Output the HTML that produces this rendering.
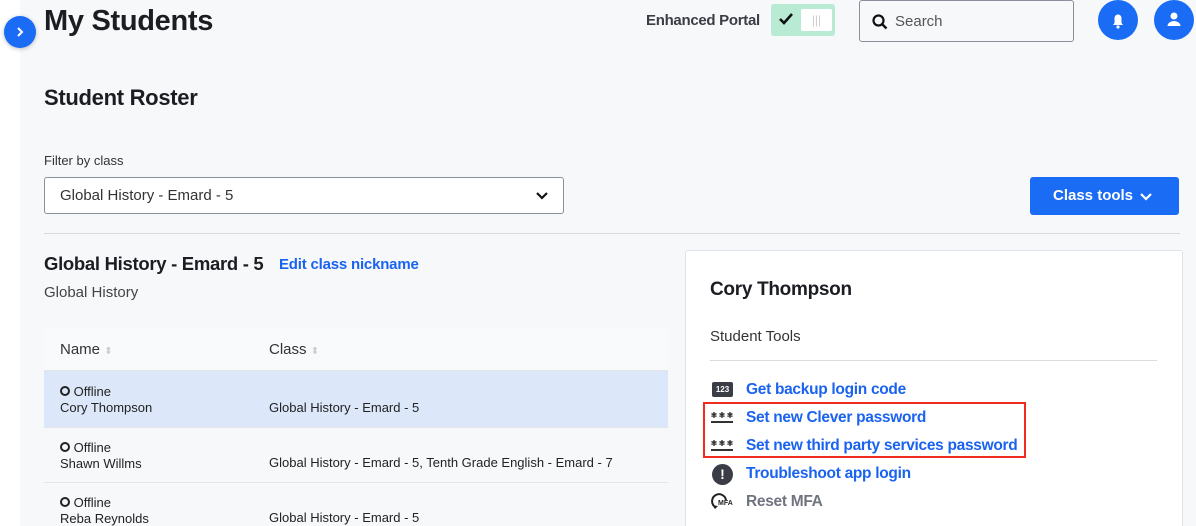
<!DOCTYPE html>
<html><head><style>
*{box-sizing:border-box;margin:0;padding:0}
html,body{width:1196px;height:526px;overflow:hidden}
body{background:#fff;font-family:"Liberation Sans",sans-serif;color:#1b1d22;position:relative}
.main{position:absolute;left:20px;top:0;width:1176px;height:526px;background:#f7f8fa}
.a{position:absolute;white-space:nowrap}
.blue{color:#1a63f0}
.circ{position:absolute;border-radius:50%;background:#1a6cf5}
</style></head><body>
<div class="main"></div>
<div class="circ" style="left:4px;top:16px;width:32px;height:32px;box-shadow:0 1px 4px rgba(0,0,0,.25)"><svg width="32" height="32"><path d="M14 12l4 4-4 4" stroke="#fff" stroke-width="2" fill="none"/></svg></div>
<div class="a" style="left:44px;top:5px;font-size:29px;font-weight:bold;letter-spacing:-0.3px">My Students</div>
<div class="a" style="left:646px;top:12px;font-size:15px;color:#3a3d45;font-weight:bold;letter-spacing:-0.3px">Enhanced Portal</div>
<div class="a" style="left:771px;top:4px;width:64px;height:32px;background:#b8ead4;border-radius:3px">
 <svg style="position:absolute;left:8px;top:9px" width="14" height="12"><path d="M1 6l4 4 8-9" stroke="#111" stroke-width="2.6" fill="none"/></svg>
 <div style="position:absolute;left:30px;top:5px;width:31px;height:22px;background:#fff;border-radius:2px;color:#ccc;font-size:12px;text-align:center;line-height:22px">|||</div></div>
<div class="a" style="left:859px;top:0;width:215px;height:42px;border:1px solid #8a8f9c;border-radius:3px;background:#f7f8fa">
 <svg style="position:absolute;left:12px;top:13px" width="16" height="16"><circle cx="6.5" cy="6.5" r="5" stroke="#111" stroke-width="2.2" fill="none"/><path d="M10 10l4.5 4.5" stroke="#111" stroke-width="2.4"/></svg>
 <span style="position:absolute;left:35px;top:12px;font-size:15px;color:#555">Search</span></div>
<div class="circ" style="left:1098px;top:0;width:40px;height:40px"><svg width="40" height="40"><path d="M15 25h10l-1.5-2v-5a3.5 3.5 0 0 0-7 0v5z" fill="#fff"/><circle cx="20" cy="27" r="1.6" fill="#fff"/></svg></div>
<div class="circ" style="left:1154px;top:0;width:40px;height:40px"><svg width="40" height="40"><circle cx="20" cy="16" r="3.5" fill="#fff"/><path d="M13.5 26a6.5 5 0 0 1 13 0z" fill="#fff"/></svg></div>
<div class="a" style="left:44px;top:85px;font-size:22px;font-weight:bold;letter-spacing:-0.3px">Student Roster</div>
<div class="a" style="left:44px;top:153px;font-size:13px;color:#333">Filter by class</div>
<div class="a" style="left:44px;top:177px;width:520px;height:37px;border:1px solid #8a8f9c;border-radius:3px;background:#fff">
 <span style="position:absolute;left:15px;top:9px;font-size:15px;color:#333">Global History - Emard - 5</span>
 <svg style="position:absolute;right:15px;top:13px" width="12" height="10"><path d="M1 2l5 5 5-5" stroke="#111" stroke-width="2.2" fill="none"/></svg></div>
<div class="a" style="left:1030px;top:177px;width:149px;height:38px;background:#1a6cf5;border-radius:3px;color:#fff;font-size:15px;font-weight:bold">
 <span style="position:absolute;left:23px;top:10px">Class tools</span>
 <svg style="position:absolute;left:110px;top:15px" width="12" height="10"><path d="M1 2l5 5 5-5" stroke="#fff" stroke-width="2.2" fill="none"/></svg></div>
<div class="a" style="left:44px;top:233px;width:1136px;height:1px;background:#d8dbe0"></div>
<div class="a" style="left:44px;top:253px;font-size:18.5px;font-weight:bold;letter-spacing:-0.3px">Global History - Emard - 5</div>
<div class="a blue" style="left:279px;top:256px;font-size:15px;font-weight:bold;letter-spacing:-0.2px">Edit class nickname</div>
<div class="a" style="left:44px;top:284px;font-size:15px;color:#444">Global History</div>
<div class="a" style="left:44px;top:328px;width:624px;height:43px;background:#f9fafb;border-bottom:1px solid #e3e5e9"></div>
<div class="a" style="left:60px;top:341px;font-size:15px;color:#333">Name <span style="color:#ccc;font-size:10px">⬍</span></div>
<div class="a" style="left:269px;top:341px;font-size:15px;color:#333">Class <span style="color:#ccc;font-size:10px">⬍</span></div>
<div class="a" style="left:44px;top:371px;width:624px;height:56px;background:#dce8fa"></div>
<div class="a" style="left:44px;top:427px;width:624px;height:1px;background:#e3e5e9"></div>
<div class="a" style="left:44px;top:482px;width:624px;height:1px;background:#e3e5e9"></div>
<div class="a" style="left:60px;top:384px;font-size:13px;line-height:16px;color:#222"><span style="display:inline-block;width:10px;height:10px;border:2px solid #222;border-radius:50%"></span> Offline<br>Cory Thompson</div>
<div class="a" style="left:269px;top:400px;font-size:13px;color:#222">Global History - Emard - 5</div>
<div class="a" style="left:60px;top:440px;font-size:13px;line-height:16px;color:#222"><span style="display:inline-block;width:10px;height:10px;border:2px solid #222;border-radius:50%"></span> Offline<br>Shawn Willms</div>
<div class="a" style="left:269px;top:455px;font-size:13px;color:#222">Global History - Emard - 5, Tenth Grade English - Emard - 7</div>
<div class="a" style="left:60px;top:495px;font-size:13px;line-height:16px;color:#222"><span style="display:inline-block;width:10px;height:10px;border:2px solid #222;border-radius:50%"></span> Offline<br>Reba Reynolds</div>
<div class="a" style="left:269px;top:510px;font-size:13px;color:#222">Global History - Emard - 5</div>
<div class="a" style="left:685px;top:250px;width:498px;height:290px;background:#fff;border:1px solid #dfe2e6;border-radius:3px"></div>
<div class="a" style="left:710px;top:279px;font-size:19px;font-weight:bold;letter-spacing:-0.3px">Cory Thompson</div>
<div class="a" style="left:710px;top:328px;font-size:15px;color:#333">Student Tools</div>
<div class="a" style="left:710px;top:360px;width:447px;height:1px;background:#d8dbe0"></div>
<div class="a" style="left:712px;top:382px;width:21px;height:15px;background:#3a3d45;border-radius:2px;color:#fff;font-size:8px;text-align:center;line-height:15px;font-weight:bold">123</div>
<svg class="a" style="left:710px;top:410px" width="24" height="14"><g stroke="#333" stroke-width="1.4"><path d="M4 2v6M1.5 3.5l5 3M1.5 6.5l5-3M12 2v6M9.5 3.5l5 3M9.5 6.5l5-3M20 2v6M17.5 3.5l5 3M17.5 6.5l5-3"/></g><rect x="1" y="11" width="22" height="2" fill="#333"/></svg>
<svg class="a" style="left:710px;top:438px" width="24" height="14"><g stroke="#333" stroke-width="1.4"><path d="M4 2v6M1.5 3.5l5 3M1.5 6.5l5-3M12 2v6M9.5 3.5l5 3M9.5 6.5l5-3M20 2v6M17.5 3.5l5 3M17.5 6.5l5-3"/></g><rect x="1" y="11" width="22" height="2" fill="#333"/></svg>
<div class="a" style="left:712px;top:464px;width:21px;height:21px;border-radius:50%;background:#3a3d45;color:#fff;font-size:14px;font-weight:bold;text-align:center;line-height:21px">!</div>
<div class="a" style="left:710px;top:492px;width:26px;height:20px;font-size:7px;font-weight:bold;color:#222"><svg width="24" height="18" style="position:absolute;left:0;top:0"><path d="M4 14a7 7 0 1 1 12-6" stroke="#222" stroke-width="2" fill="none"/><path d="M2 13l3 4 3-3" fill="#222"/></svg><span style="position:absolute;left:8px;top:8px">MFA</span></div>
<div class="a blue" style="left:746px;top:381px;font-size:15.5px;font-weight:bold;letter-spacing:-0.3px">Get backup login code</div>
<div class="a blue" style="left:746px;top:409px;font-size:15.5px;font-weight:bold;letter-spacing:-0.3px">Set new Clever password</div>
<div class="a blue" style="left:746px;top:437px;font-size:15.5px;font-weight:bold;letter-spacing:-0.3px">Set new third party services password</div>
<div class="a blue" style="left:746px;top:465px;font-size:15.5px;font-weight:bold;letter-spacing:-0.3px">Troubleshoot app login</div>
<div class="a" style="left:746px;top:493px;font-size:15.5px;font-weight:bold;letter-spacing:-0.3px;color:#70747e">Reset MFA</div>
<div class="a" style="left:703px;top:402px;width:323px;height:56px;border:2px solid #f22b1f"></div>
</body></html>
